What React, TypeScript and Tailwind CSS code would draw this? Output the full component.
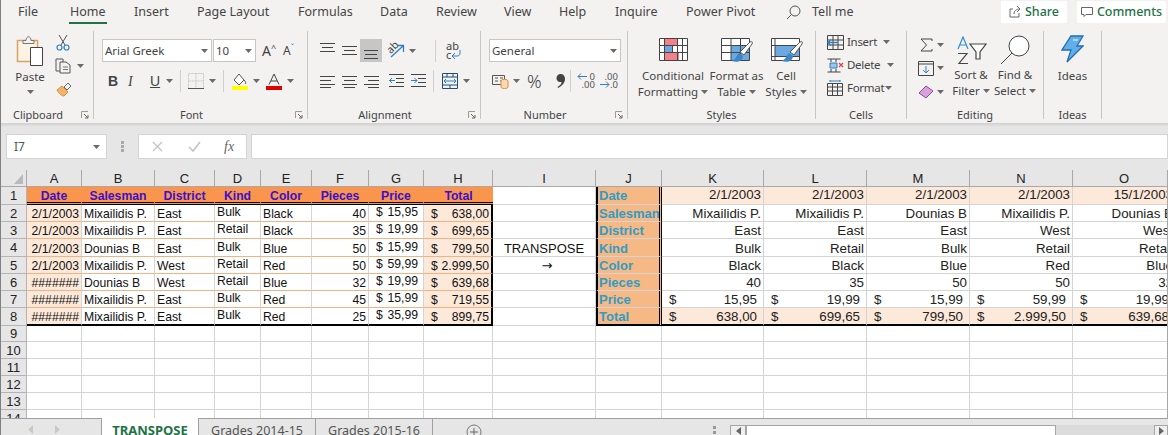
import type { ReactNode } from "react";

const Caret = ({ className = "" }: { className?: string }) => (
  <svg width="7" height="4" viewBox="0 0 7 4" className={"shrink-0 " + className}>
    <path d="M0 0h7L3.5 4z" fill="#6a6a6a" />
  </svg>
);

const Launcher = () => (
  <svg width="8" height="8" viewBox="0 0 8 8" className="absolute right-[4px] top-[4px]">
    <path d="M.5 7V.5H7" fill="none" stroke="#9a9a9a" />
    <path d="M3 3l4 4M7 4v3H4" fill="none" stroke="#666" />
  </svg>
);

const Sep = ({ className = "" }: { className?: string }) => (
  <div className={"h-[22px] w-px shrink-0 bg-[#d2d0ce] " + className} />
);

function Group({ w, label, launcher, children }: { w: string; label: string; launcher?: boolean; children: ReactNode }) {
  return (
    <div className={"flex h-[88px] shrink-0 flex-col border-r border-[#c8c6c4] " + w}>
      <div className="h-[76px]">{children}</div>
      <div className={"relative h-[12px] text-center text-[11px] leading-[16px] text-[#444] " + (launcher ? "pr-[18px]" : "")}>
        {label}
        {launcher && <Launcher />}
      </div>
    </div>
  );
}

const Lines = ({ rows }: { rows: [number, number, number][] }) => (
  <svg width="16" height="20" viewBox="0 0 16 20">
    {rows.map(([y, a, b]) => (
      <path key={y} d={`M${a} ${y}.5H${b}`} stroke="#444" fill="none" />
    ))}
  </svg>
);

const BigLabel = ({ lines, caret }: { lines: string[]; caret?: boolean }) => (
  <div className="mt-[1px] text-center text-[11.5px] leading-[16px] text-[#444]">
    <div className="whitespace-nowrap">{lines[0]}</div>
    <div className="flex items-center justify-center gap-[3px] whitespace-nowrap">
      {lines[1]}
      {caret && <Caret />}
    </div>
  </div>
);

const PasteIcon = () => (
  <svg width="28" height="31" viewBox="0 0 28 31">
    <path d="M1.5 5.5h20v21h-20z" fill="#fbf3e6" stroke="#dba35e" strokeWidth="1.5" />
    <path d="M7 5.5h3c0-5 5-5 5 0h3v3H7z" fill="#f3f2f1" stroke="#777" />
    <path d="M14.5 12.5h12v18h-12z" fill="#fff" stroke="#444" />
  </svg>
);

const ScissorsIcon = () => (
  <svg width="14" height="17" viewBox="0 0 14 17">
    <path d="M3 1l6 10M11 1L5 11" stroke="#555" fill="none" />
    <circle cx="3.5" cy="13.5" r="2.5" fill="none" stroke="#2f7fc1" strokeWidth="1.2" />
    <circle cx="10.5" cy="13.5" r="2.5" fill="none" stroke="#2f7fc1" strokeWidth="1.2" />
  </svg>
);

const CopyIcon = () => (
  <svg width="17" height="16" viewBox="0 0 17 16">
    <path d="M1 1h7v12H1z" fill="none" stroke="#555" />
    <path d="M5 4h6l4 3v8H5z" fill="#f3f2f1" stroke="#555" />
    <path d="M8 9h5M8 11.500h5" stroke="#777" />
  </svg>
);

const BrushIcon = () => (
  <svg width="16" height="15" viewBox="0 0 16 15">
    <path d="M1 8l5-4 6 6-4 4C6 14 3 12 1 8z" fill="#f0b46a" stroke="#e08f36" />
    <path d="M8 5l4-4 3 3-4 4z" fill="#f3f2f1" stroke="#666" />
  </svg>
);

const FillIcon = () => (
  <svg width="16" height="17" viewBox="0 0 16 17">
    <path d="M7 1l5 6-5 5-5-5z" fill="#fff" stroke="#555" />
    <path d="M12 7c2 2 2 3 1.500 4" stroke="#555" fill="none" />
    <path d="M0 13h16v4H0z" fill="#ffff00" />
  </svg>
);

const FontColorIcon = () => (
  <svg width="16" height="17" viewBox="0 0 16 17">
    <path d="M3 11.500L8 1l5 10.500M5 8h6" stroke="#444" fill="none" />
    <path d="M0 13h16v4H0z" fill="#e00000" />
  </svg>
);

const BorderIcon = () => (
  <svg width="16" height="16" viewBox="0 0 16 16">
    <path d="M.5.5h15v15H.5zM8 .5v15M.5 8h15" fill="none" stroke="#c4c4c4" strokeDasharray="2 1" />
    <path d="M0 15.500h16" stroke="#555" />
  </svg>
);

const OrientIcon = () => (
  <div className="relative h-[18px] w-[18px]">
    <span className="absolute left-[-1px] top-[-1px] -rotate-45 text-[10.5px] leading-[12px] text-[#444]">ab</span>
    <svg width="18" height="18" viewBox="0 0 18 18" className="absolute left-0 top-0">
      <path d="M4 15L16 4M10 3.500h6.500V10" stroke="#2f7fc1" strokeWidth="1.300" fill="none" />
    </svg>
  </div>
);

const WrapIcon = () => (
  <div className="relative h-[19px] w-[16px] text-[11px] leading-[9px] text-[#444]">
    <div>ab</div>
    <div className="flex items-center">
      c
      <svg width="10" height="9" viewBox="0 0 10 9">
        <path d="M9 0v3c0 2-1 3-3 3H1M4 3L1 6l3 3" stroke="#2f7fc1" fill="none" />
      </svg>
    </div>
  </div>
);

const IndentIcon = ({ dir }: { dir: "left" | "right" }) => (
  <svg width="15" height="14" viewBox="0 0 15 14">
    <path d="M0 .5h15M7 4.500h8M7 8.500h8M0 12.500h15" stroke="#444" />
    <path d={dir === "left" ? "M6 6.500H0M3 4L.5 6.500 3 9" : "M0 6.500h6M3.500 4L6 6.500 3.500 9"} stroke="#2f7fc1" fill="none" />
  </svg>
);

const MergeIcon = () => (
  <svg width="16" height="16" viewBox="0 0 16 16">
    <path d="M.5.5h15v15H.5zM.5 4h15M.5 12h15M8 12v3.500M5 .5V4M11 .5V4" fill="none" stroke="#1f4e79" />
    <path d="M2 8h12M4 6L2 8l2 2M12 6l2 2-2 2" stroke="#2f7fc1" fill="none" />
  </svg>
);

const AccountingIcon = () => (
  <svg width="17" height="16" viewBox="0 0 17 16">
    <path d="M.5 2.500h12v9H.5z" fill="none" stroke="#555" />
    <path d="M3 5h3M3 8h3M8 5h3M8 8h2" stroke="#555" />
    <ellipse cx="12.500" cy="8" rx="3.500" ry="1.700" fill="#f6d9b6" stroke="#e08f36" />
    <path d="M9 8v6c0 2 7 2 7 0V8" fill="#f6d9b6" stroke="#e08f36" />
  </svg>
);

const CommaIcon = () => (
  <svg width="9" height="14" viewBox="0 0 9 14">
    <path d="M4.500 0C7.500 0 9 2 9 5c0 4-3 7-7 9l-.5-1c2.500-1.500 4-3 4-5C3 8.500 .5 7 .5 4.200.5 1.800 2.300 0 4.500 0z" fill="#444" />
  </svg>
);

const DecimalIcon = ({ more }: { more?: boolean }) => (
  <div className="relative h-[16px] w-[18px] text-[9.5px] leading-[8px] text-[#555]">
    <div className="text-right">{more ? "0" : ".00"}</div>
    <div className="text-right">{more ? ".00" : ".0"}</div>
    <svg width="10" height="7" viewBox="0 0 10 7" className={"absolute " + (more ? "left-0 top-0" : "left-0 top-[8px]")}>
      <path d={more ? "M10 3.500H1M4 .5L1 3.500l3 3" : "M0 3.500h9M6 .5l3 3-3 3"} stroke="#2f7fc1" fill="none" />
    </svg>
  </div>
);

const CondIcon = () => (
  <svg width="29" height="23" viewBox="0 0 29 23">
    <path d="M.5.5h28v22H.5z" fill="#fff" stroke="#444" />
    <path d="M5 1h13v6H5zM5 15h15v7H5z" fill="#f4808a" />
    <path d="M5 8h8v6H5z" fill="#6ca9e0" />
    <path d="M.5 7.500h28M.5 14.500h28M5.500 .5v22M18.500 .5v22M23.500 .5v22M13.500 7.500v7" stroke="#444" fill="none" />
  </svg>
);

const BrushTip = () => (
  <>
    <path d="M29 4c2-1 3 0 2 2l-8 11-4-3z" fill="#fff" stroke="#555" />
    <path d="M18 15c-2 1-2 5-7 8 5 2 11 0 11-5z" fill="#3c87c9" />
  </>
);

const TableIcon = () => (
  <svg width="32" height="26" viewBox="0 0 32 26">
    <path d="M.5.5h28v22H.5z" fill="#fff" stroke="#444" />
    <path d="M10 7h18v15H10z" fill="#6ca9e0" />
    <path d="M.5 7.500h28M.5 14.500h28M10 .5v22M19.500 .5v22" stroke="#444" fill="none" />
    <BrushTip />
  </svg>
);

const StylesIcon = () => (
  <svg width="32" height="26" viewBox="0 0 32 26">
    <path d="M.5.5h28v22H.5z" fill="#fff" stroke="#444" />
    <path d="M4 7h24v11H4z" fill="#6ca9e0" />
    <path d="M.5 7.500h28M4 .5v22M.5 18.500h28" stroke="#444" fill="none" />
    <BrushTip />
  </svg>
);

const InsertIcon = () => (
  <svg width="17" height="15" viewBox="0 0 17 15">
    <path d="M.5.5h16v14H.5zM.5 5h16M.5 10h16M6 .5v14M11 .5v14" fill="none" stroke="#444" />
    <path d="M1 7.500h10M4 4.500l-3 3 3 3" stroke="#2f7fc1" strokeWidth="1.300" fill="#fff" />
  </svg>
);

const DeleteIcon = () => (
  <svg width="17" height="15" viewBox="0 0 17 15">
    <path d="M.5 1h13M.5 14h13M4 1v3M9 1v3M4 11v3M9 11v3" fill="none" stroke="#444" />
    <path d="M3 5h7v5H3z" fill="#9cc5ea" stroke="#2f7fc1" />
    <path d="M12 5l4 4M16 5l-4 4" stroke="#e04050" strokeWidth="1.300" />
  </svg>
);

const FormatIcon = () => (
  <svg width="17" height="16" viewBox="0 0 17 16">
    <path d="M.5 3.500h15v12H.5zM.5 7h15M.5 11h15M5.500 3.500v12M10.500 3.500v12" fill="none" stroke="#444" />
    <path d="M3 1h10M3 0v2M13 0v2" stroke="#2f7fc1" fill="none" />
  </svg>
);

const SortIcon = () => (
  <svg width="31" height="29" viewBox="0 0 31 29">
    <path d="M12 27.500H3l8-10H2" fill="none" stroke="#444" strokeWidth="1.200" />
    <path d="M2 13L7 1l5 12M4 9h6" fill="none" stroke="#2f8fd0" strokeWidth="1.200" />
    <path d="M14 8h16l-6 8v7h-4v-7z" fill="#fff" stroke="#444" strokeWidth="1.200" />
  </svg>
);

const FindIcon = () => (
  <svg width="30" height="30" viewBox="0 0 30 30">
    <circle cx="19" cy="11" r="10" fill="#fff" stroke="#444" />
    <path d="M12 18L1 29" stroke="#444" />
  </svg>
);

const IdeasIcon = () => (
  <svg width="23" height="28" viewBox="0 0 23 28">
    <path d="M10 1h12l-6 10h6L6 27l4-12H1z" fill="#62aee8" stroke="#1f6fb5" strokeWidth="1.300" />
    <path d="M12 5h5" stroke="#fff" />
  </svg>
);

const tabs = [
  ["File", "w-[52px]"],
  ["Home", "w-[64px]"],
  ["Insert", "w-[63px]"],
  ["Page Layout", "w-[101px]"],
  ["Formulas", "w-[82px]"],
  ["Data", "w-[56px]"],
  ["Review", "w-[68px]"],
  ["View", "w-[55px]"],
  ["Help", "w-[56px]"],
  ["Inquire", "w-[71px]"],
  ["Power Pivot", "w-[100px]"],
];

function Ribbon() {
  return (
    <div className="bg-[#f3f2f1] font-['Noto_Sans',sans-serif] text-[#444]">
      <div className="flex h-[31px] items-start pl-[17px] text-[12.5px]">
        {tabs.map(([name, w]) => (
          <div key={name} className={"relative h-[24px] whitespace-nowrap leading-[24px] " + w}>
            {name}
            {name === "Home" && <div className="absolute left-[-1px] top-[22px] h-[2px] w-[38px] bg-[#217346]" />}
          </div>
        ))}
        <svg width="15" height="15" viewBox="0 0 15 15" className="mt-[5px]">
          <circle cx="9" cy="6" r="5" fill="none" stroke="#555" />
          <path d="M5.500 9.500L1 14" stroke="#555" />
        </svg>
        <div className="ml-[11px] w-[189px] whitespace-nowrap leading-[24px]">Tell me</div>
        <div className="mt-[1px] flex h-[22px] w-[66px] items-center justify-center gap-[4px] rounded-[2px] bg-white font-medium text-[#217346]">
          <svg width="12" height="12" viewBox="0 0 12 12">
            <path d="M4 3H1v8h9V7M5 8c0-3 2-5 6-5M8 0l3 3-3 3" fill="none" stroke="#666" />
          </svg>
          Share
        </div>
        <div className="ml-[10px] mt-[1px] flex h-[22px] w-[89px] items-center justify-center gap-[4px] rounded-[2px] bg-white font-medium text-[#217346]">
          <svg width="12" height="12" viewBox="0 0 12 12">
            <path d="M.5 1.500h11v7H5l-2 2v-2H.5z" fill="none" stroke="#666" />
          </svg>
          Comments
        </div>
      </div>
      <div className="flex h-[92px] items-start">
        <Group w="w-[93px]" label="Clipboard" launcher>
          <div className="flex">
            <div className="ml-[4px] flex w-[50px] flex-col items-center pt-[4px]">
              <PasteIcon />
              <div className="mt-[3px] text-[11.5px] leading-[16px]">Paste</div>
              <Caret className="mt-[5px]" />
            </div>
            <div className="flex flex-col pt-[3px]">
              <div className="ml-[1px]"><ScissorsIcon /></div>
              <div className="mt-[7px] flex items-center gap-[5px]"><CopyIcon /><Caret /></div>
              <div className="ml-[1px] mt-[8px]"><BrushIcon /></div>
            </div>
          </div>
        </Group>
        <Group w="w-[214px]" label="Font" launcher>
          <div className="flex items-center pl-[8px] pt-[8px]">
            <div className="flex h-[23px] w-[110px] items-center justify-between border border-[#c8c6c4] bg-white pl-[2px] pr-[3px] text-[11.5px]">
              Arial Greek <Caret />
            </div>
            <div className="ml-[1px] flex h-[23px] w-[43px] items-center justify-between border border-[#c8c6c4] bg-white pl-[2px] pr-[3px] text-[11.5px]">
              10 <Caret />
            </div>
            <div className="ml-[6px] flex items-start text-[14px] leading-[16px]">A<span className="text-[9px] leading-[10px] text-[#444]">^</span></div>
            <div className="ml-[7px] flex items-start text-[12px] leading-[16px]">A<span className="text-[8px] leading-[10px] text-[#2f7fc1]">ˇ</span></div>
          </div>
          <div className="mt-[8px] flex h-[22px] items-center pl-[14px] font-['Liberation_Sans',sans-serif] text-[14px]">
            <div className="w-[20px] font-bold">B</div>
            <div className="w-[22px] font-['Liberation_Serif',serif] italic">I</div>
            <div className="w-[16px] underline">U</div>
            <Caret />
            <Sep className="ml-[7px]" />
            <div className="ml-[7px]"><BorderIcon /></div>
            <Caret className="ml-[5px]" />
            <Sep className="ml-[7px]" />
            <div className="ml-[8px]"><FillIcon /></div>
            <Caret className="ml-[5px]" />
            <div className="ml-[6px]"><FontColorIcon /></div>
            <Caret className="ml-[5px]" />
          </div>
        </Group>
        <Group w="w-[173px]" label="Alignment" launcher>
          <div className="flex items-center pl-[12px] pt-[8px]">
            <div className="w-[22px]"><Lines rows={[[2, 0, 15], [6, 2, 13], [10, 0, 15]]} /></div>
            <div className="w-[18px]"><Lines rows={[[5, 0, 15], [9, 2, 13], [13, 0, 15]]} /></div>
            <div className="flex h-[23px] w-[22px] items-center justify-center bg-[#c6c6c6]"><Lines rows={[[9, 1, 15], [13, 2, 14], [17, 1, 15]]} /></div>
            <div className="ml-[5px]"><OrientIcon /></div>
            <Caret className="ml-[4px]" />
            <Sep className="ml-[19px]" />
            <div className="ml-[10px]"><WrapIcon /></div>
          </div>
          <div className="mt-[8px] flex h-[22px] items-center pl-[12px]">
            <div className="w-[22px]"><Lines rows={[[5, 0, 15], [9, 0, 11], [13, 0, 15], [16, 0, 11]]} /></div>
            <div className="w-[22px]"><Lines rows={[[5, 0, 15], [9, 2, 13], [13, 0, 15], [16, 2, 13]]} /></div>
            <div className="w-[25px]"><Lines rows={[[5, 0, 15], [9, 4, 15], [13, 0, 15], [16, 4, 15]]} /></div>
            <IndentIcon dir="left" />
            <div className="ml-[7px]"><IndentIcon dir="right" /></div>
            <Sep className="ml-[7px]" />
            <div className="ml-[8px]"><MergeIcon /></div>
            <Caret className="ml-[5px]" />
          </div>
        </Group>
        <Group w="w-[147px]" label="Number" launcher>
          <div className="pl-[8px] pt-[8px]">
            <div className="flex h-[23px] w-[132px] items-center justify-between border border-[#c8c6c4] bg-white pl-[2px] pr-[3px] text-[11.5px]">
              General <Caret />
            </div>
          </div>
          <div className="mt-[8px] flex h-[22px] items-center pl-[11px]">
            <AccountingIcon />
            <Caret className="ml-[4px]" />
            <div className="ml-[7px] w-[24px] text-[18px] font-light leading-[22px]">%</div>
            <div className="ml-[5px] w-[12px]"><CommaIcon /></div>
            <Sep className="ml-[2px]" />
            <div className="ml-[6px]"><DecimalIcon more /></div>
            <div className="ml-[5px]"><DecimalIcon /></div>
          </div>
        </Group>
        <Group w="w-[188px]" label="Styles">
          <div className="flex pt-[7px]">
            <div className="ml-[8px] flex w-[74px] flex-col items-center">
              <div className="h-[29px] w-[29px]"><CondIcon /></div>
              <BigLabel lines={["Conditional", "Formatting"]} caret />
            </div>
            <div className="ml-[-9px] flex w-[71px] flex-col items-center">
              <div className="h-[29px] w-[32px]"><TableIcon /></div>
              <BigLabel lines={["Format as", "Table"]} caret />
            </div>
            <div className="ml-[-6px] flex w-[40px] flex-col items-center">
              <div className="h-[29px] w-[32px] pl-[1px]"><StylesIcon /></div>
              <BigLabel lines={["Cell", "Styles"]} caret />
            </div>
          </div>
        </Group>
        <Group w="w-[91px]" label="Cells">
          <div className="flex flex-col gap-[7px] pl-[11px] pt-[3px] text-[11.5px] leading-[16px] tracking-[-0.3px]">
            <div className="flex items-center"><InsertIcon /><span className="ml-[3px] w-[36px]">Insert</span><Caret /></div>
            <div className="flex items-center"><DeleteIcon /><span className="ml-[3px] w-[40px]">Delete</span><Caret /></div>
            <div className="flex items-center"><FormatIcon /><span className="ml-[3px] w-[38px]">Format</span><Caret /></div>
          </div>
        </Group>
        <Group w="w-[137px]" label="Editing">
          <div className="flex pl-[11px] pt-[3px]">
            <div className="flex w-[31px] flex-col">
              <div className="flex h-[22px] items-center pl-[2px]">
                <svg width="13" height="14" viewBox="0 0 13 14" className="mr-[3px]">
                  <path d="M12 3V1H1l5.500 6L1 13h11v-2" fill="none" stroke="#444" />
                </svg>
                <Caret className="ml-[1px]" />
              </div>
              <div className="flex h-[24px] items-center">
                <svg width="16" height="15" viewBox="0 0 16 15">
                  <path d="M.5.5h15v14H.5zM.5 3h15" fill="none" stroke="#444" />
                  <path d="M8 5v7M5 9l3 3 3-3" stroke="#2f7fc1" fill="none" />
                </svg>
                <Caret className="ml-[3px]" />
              </div>
              <div className="flex h-[24px] items-center">
                <svg width="16" height="14" viewBox="0 0 16 14">
                  <path d="M1 8l7-7 7 5-7 7z" fill="#d9a0dc" stroke="#8a4a9a" />
                </svg>
                <Caret className="ml-[3px]" />
              </div>
            </div>
            <div className="flex w-[44px] flex-col items-center pt-[2px]">
              <div className="h-[30px]"><SortIcon /></div>
              <BigLabel lines={["Sort &", "Filter"]} caret />
            </div>
            <div className="flex w-[44px] flex-col items-center pt-[1px]">
              <div className="h-[31px]"><FindIcon /></div>
              <BigLabel lines={["Find &", "Select"]} caret />
            </div>
          </div>
        </Group>
        <Group w="w-[58px]" label="Ideas">
          <div className="flex flex-col items-center pt-[4px]">
            <div className="h-[29px]"><IdeasIcon /></div>
            <div className="mt-[4px] text-[11.5px] leading-[16px]">Ideas</div>
          </div>
        </Group>
      </div>
    </div>
  );
}

function FormulaBar() {
  return (
    <div className="bg-[#e6e6e6]">
      <div className="h-[4px] bg-linear-to-b from-[#cfcfcf] to-[#e6e6e6]" />
      <div className="flex h-[43px] items-start pl-[5px] pt-[7px] font-['Noto_Sans',sans-serif] text-[12px] text-[#555]">
        <div className="flex h-[25px] w-[101px] items-center justify-between border border-[#d4d4d4] bg-white pl-[7px] pr-[6px]">
          I7 <Caret />
        </div>
        <div className="flex h-[25px] w-[31px] items-center justify-center">
          <svg width="3" height="11" viewBox="0 0 3 11"><path d="M0 0h3v3H0zM0 4h3v3H0zM0 8h3v3H0z" fill="#aaa" /></svg>
        </div>
        <div className="flex h-[25px] w-[109px] items-center border border-[#d4d4d4] bg-white pl-[13px]">
          <svg width="11" height="11" viewBox="0 0 11 11"><path d="M1 1l9 9M10 1l-9 9" stroke="#c4c4c4" strokeWidth="1.400" /></svg>
          <svg width="13" height="11" viewBox="0 0 13 11" className="ml-[25px]"><path d="M1 6l4 4 7-9" stroke="#c4c4c4" strokeWidth="1.600" fill="none" /></svg>
          <span className="ml-[23px] font-['Liberation_Serif',serif] text-[14px] italic text-[#666]">fx</span>
        </div>
        <div className="ml-[4px] h-[25px] flex-1 border border-[#d4d4d4] bg-white" />
      </div>
    </div>
  );
}

const sales = [
  ["2/1/2003", "Mixailidis P.", "East", "Bulk", "Black", "40", "15,95", "638,00"],
  ["2/1/2003", "Mixailidis P.", "East", "Retail", "Black", "35", "19,99", "699,65"],
  ["2/1/2003", "Dounias B", "East", "Bulk", "Blue", "50", "15,99", "799,50"],
  ["2/1/2003", "Mixailidis P.", "West", "Retail", "Red", "50", "59,99", "2.999,50"],
  ["#######", "Dounias B", "West", "Retail", "Blue", "32", "19,99", "639,68"],
  ["#######", "Mixailidis P.", "East", "Bulk", "Red", "45", "15,99", "719,55"],
  ["#######", "Mixailidis P.", "East", "Bulk", "Red", "25", "35,99", "899,75"],
];
const headers = ["Date", "Salesman", "District", "Kind", "Color", "Pieces", "Price", "Total"];
const letters = ["A", "B", "C", "D", "E", "F", "G", "H", "I", "J", "K", "L", "M", "N", "O"];
const transposed = [
  ["2/1/2003", "Mixailidis P.", "East", "Bulk", "Black", "40", "15,95", "638,00"],
  ["2/1/2003", "Mixailidis P.", "East", "Retail", "Black", "35", "19,99", "699,65"],
  ["2/1/2003", "Dounias B", "East", "Bulk", "Blue", "50", "15,99", "799,50"],
  ["2/1/2003", "Mixailidis P.", "West", "Retail", "Red", "50", "59,99", "2.999,50"],
  ["15/1/2003", "Dounias B", "West", "Retail", "Blue", "32", "19,99", "639,68"],
];

const line = "border-r border-b border-[#d4d4d4] ";
const base = "flex items-end overflow-hidden whitespace-nowrap leading-[14px] ";

const Acc = ({ v, cls }: { v: string; cls: string }) => (
  <div className={base + "justify-between " + cls}>
    <span>$</span>
    <span>{v}</span>
  </div>
);

function Sheet() {
  const cells: ReactNode[] = [];
  cells.push(
    <div key="corner" className="relative border-r border-b border-[#a8a8a8] bg-[#e6e6e6]">
      <svg width="9" height="10" viewBox="0 0 9 10" className="absolute bottom-[2px] right-[3px]"><path d="M9 0v10H0z" fill="#b9b9b9" /></svg>
    </div>
  );
  letters.forEach((l) =>
    cells.push(
      <div key={l} className="flex items-center justify-center border-r border-b border-[#a8a8a8] bg-[#e6e6e6] text-[13px] leading-[13px] text-[#222]">
        {l}
      </div>
    )
  );
  for (let r = 1; r <= 14; r++) {
    const i = r - 2;
    cells.push(
      <div key={"h" + r} className="flex items-center justify-center border-r border-b border-[#b4b4b4] bg-[#e6e6e6] text-[13px] leading-[13px] text-[#222]">
        {r}
      </div>
    );
    const last = r === 8;
    const edge = last ? "border-b-2 border-b-black " : "";
    // first table, A to H
    if (r === 1) {
      headers.forEach((h, c) =>
        cells.push(
          <div key={h} className={"flex items-center justify-center border-b-[3px] border-double border-b-black bg-[#f9954c] pt-[3px] text-[12.2px] font-bold leading-[14px] text-[#3a10d0]" + (c === 7 ? "" : " border-r border-r-[#f9954c]")}>
            {h}
          </div>
        )
      );
    } else if (r <= 8) {
      const row = sales[i];
      const under = last ? edge : "border-b-[#f4b183] ";
      cells.push(<div key={r + "a"} className={base + line + under + "justify-end bg-[#fde9d9] pr-[2px]"}>{row[0]}</div>);
      cells.push(<div key={r + "b"} className={base + line + under + "pl-[2px]"}>{row[1]}</div>);
      cells.push(<div key={r + "c"} className={base + line + under + "pl-[2px]"}>{row[2]}</div>);
      cells.push(<div key={r + "d"} className={base + line + under + "pb-[2px] pl-[2px]"}>{row[3]}</div>);
      cells.push(<div key={r + "e"} className={base + line + under + "pl-[2px]"}>{row[4]}</div>);
      cells.push(<div key={r + "f"} className={base + line + under + "justify-end pr-[2px]"}>{row[5]}</div>);
      cells.push(<Acc key={r + "g"} v={row[6]} cls={line + under + "pb-[2px] pl-[7px] pr-[5px]"} />);
      cells.push(<Acc key={r + "h"} v={row[7]} cls={line + under + "border-r-2 border-r-black bg-[#fde9d9] pl-[7px] pr-[2px]"} />);
    } else {
      for (let c = 0; c < 8; c++) cells.push(<div key={r + "x" + c} className={line} />);
    }
    // column I
    cells.push(
      <div key={r + "i"} className={"flex items-end justify-center leading-[15px] text-[#111] " + line + (r === 5 ? "pl-[6px] font-['DejaVu_Sans',sans-serif] text-[13px]" : "text-[13px]")}>
        {r === 4 ? "TRANSPOSE" : r === 5 ? "→" : ""}
      </div>
    );
    // second table, J onwards
    if (r <= 8) {
      cells.push(
        <div key={r + "j"} className={"flex items-end overflow-hidden whitespace-nowrap border-r-[3px] border-l-2 border-r-black border-l-black border-double bg-[#f6b884] pl-[1px] text-[13px] font-bold leading-[15px] text-[#2e9dc9] " + (last ? "border-b-2 border-b-black" : "border-b border-b-[#d4d4d4] ") + (r === 1 ? "pb-[1px]" : "")}>
          {headers[r - 1]}
        </div>
      );
      transposed.forEach((t, c) => {
        const v = t[r - 1];
        const key = r + "k" + c;
        if (r >= 7) {
          const bg = r === 8 ? edge + "bg-[#fde9d9] " : "";
          cells.push(<Acc key={key} v={v} cls={line + bg + "pl-[7px] pr-[6px] text-[13.33px] text-[#222]"} />);
        } else {
          cells.push(
            <div key={key} className={base + line + (r === 1 ? "bg-[#fde9d9] pb-[2px] " : "") + "justify-end pr-[2px] text-[13.33px] text-[#222]"}>
              {v}
            </div>
          );
        }
      });
    } else {
      for (let c = 0; c < 6; c++) cells.push(<div key={r + "y" + c} className={line} />);
    }
  }
  return (
    <div className="h-[248px] overflow-hidden border-r border-[#a8a8a8] bg-white">
      <div className="grid w-[1175px] grid-cols-[26px_55px_73px_60px_46px_51px_57px_55px_69px_103px_66px_102px_103px_103px_103px_103px] grid-rows-[17px_18px_17px_17px_18px_17px_17px_17px_18px_16px_17px_17px_17px_17px_17px] font-['Liberation_Sans',Arial,sans-serif] text-[12.2px] text-[#111]">
        {cells}
      </div>
    </div>
  );
}

function TabBar() {
  return (
    <div className="flex h-[17px] overflow-hidden bg-[#e6e6e6] font-['Noto_Sans',sans-serif] text-[12.5px] text-[#555]">
      <div className="flex w-[100px] shrink-0 items-start gap-[22px] border-t border-[#a0a0a0] pl-[27px] pt-[6px]">
        <svg width="5" height="9" viewBox="0 0 5 9"><path d="M5 0v9L0 4.500z" fill="#c8c8c8" /></svg>
        <svg width="5" height="9" viewBox="0 0 5 9"><path d="M0 0v9l5-4.500z" fill="#c8c8c8" /></svg>
      </div>
      <div className="w-[98px] shrink-0 border-x border-[#a0a0a0] bg-white pt-[2px] text-center text-[13px] font-bold leading-[20px] text-[#217346]">TRANSPOSE</div>
      <div className="flex w-[117px] shrink-0 justify-center border-t border-r border-[#a0a0a0] pt-[2px] leading-[20px]">Grades 2014-15</div>
      <div className="flex w-[117px] shrink-0 justify-center border-t border-r border-[#a0a0a0] pt-[2px] leading-[20px]">Grades 2015-16</div>
      <div className="w-[274px] shrink-0 border-t border-[#a0a0a0] pl-[33px] pt-[5px]">
        <svg width="16" height="16" viewBox="0 0 16 16"><circle cx="8" cy="8" r="7" fill="none" stroke="#777" /><path d="M8 4v8M4 8h8" stroke="#666" /></svg>
      </div>
      <div className="flex w-[15px] shrink-0 justify-center border-t border-[#a0a0a0] pt-[7px]">
        <svg width="3" height="8" viewBox="0 0 3 8"><path d="M0 0h3v3H0zM0 5h3v3H0z" fill="#999" /></svg>
      </div>
      <div className="flex flex-1 items-start border-t border-[#a0a0a0] pl-[8px] pt-[6px]">
        <div className="flex h-[12px] w-[16px] shrink-0 items-center justify-center border border-[#a6a6a6] bg-[#f0f0f0]">
          <svg width="5" height="8" viewBox="0 0 5 8"><path d="M5 0v8L0 4z" fill="#666" /></svg>
        </div>
        <div className="h-[12px] w-[310px] shrink-0 border border-[#a6a6a6] bg-white" />
        <div className="h-[12px] w-[98px] shrink-0 bg-[#dcdcdc]" />
        <div className="flex h-[12px] w-[14px] shrink-0 items-center justify-center border border-[#a6a6a6] bg-[#f0f0f0]">
          <svg width="5" height="8" viewBox="0 0 5 8"><path d="M0 0v8l5-4z" fill="#666" /></svg>
        </div>
      </div>
    </div>
  );
}

export default function App() {
  return (
    <div className="h-[435px] w-[1168px] overflow-hidden border-l border-[#808080] bg-[#e6e6e6]">
      <Ribbon />
      <FormulaBar />
      <Sheet />
      <TabBar />
    </div>
  );
}
